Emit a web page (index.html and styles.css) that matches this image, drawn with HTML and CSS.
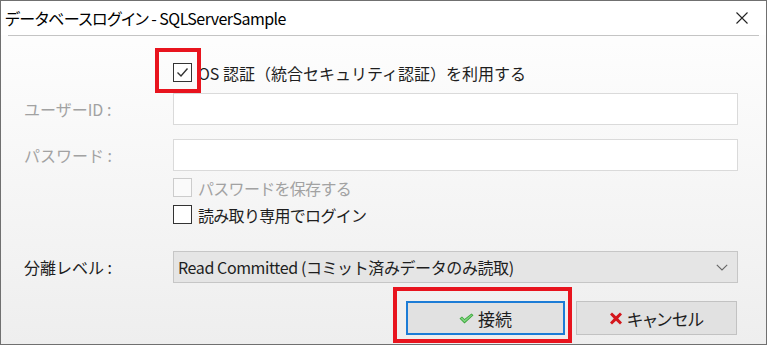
FILE: index.html
```html
<!DOCTYPE html>
<html lang="ja">
<head>
<meta charset="utf-8">
<link rel="stylesheet" href="styles.css">
</head>
<body>
<div class="window">
  <div class="titlebar">
    <span class="title">データベースログイン - SQLServerSample</span>
    <svg class="close" width="12" height="12" viewBox="0 0 12 12"><path d="M0.5 0.5 L11.5 11.5 M11.5 0.5 L0.5 11.5" stroke="#222" stroke-width="1.1" fill="none"/></svg>
  </div>
  <div class="sep"></div>
  <div class="content">
    <div class="row row-os">
      <div class="lbl"></div>
      <label class="check">
        <span class="box checked">
          <svg width="17" height="17" viewBox="0 0 17 17"><polyline points="3.5,8.5 7,12 13.5,4.5" fill="none" stroke="#333" stroke-width="1.4"/></svg>
          <span class="mark"></span>
        </span>
        <span class="ctext">OS 認証（統合セキュリティ認証）を利用する</span>
      </label>
    </div>
    <div class="row row-user">
      <div class="lbl disabled">ユーザーID :</div>
      <div class="input"></div>
    </div>
    <div class="row row-pass">
      <div class="lbl disabled">パスワード :</div>
      <div class="input"></div>
    </div>
    <div class="row row-save">
      <div class="lbl"></div>
      <label class="check">
        <span class="box disabled-box"></span>
        <span class="ctext tight disabled">パスワードを保存する</span>
      </label>
    </div>
    <div class="row row-ro">
      <div class="lbl"></div>
      <label class="check">
        <span class="box"></span>
        <span class="ctext tight">読み取り専用でログイン</span>
      </label>
    </div>
    <div class="row row-iso">
      <div class="lbl">分離レベル :</div>
      <div class="combo">
        <span class="combo-text">Read Committed (コミット済みデータのみ読取)</span>
        <svg class="chev" width="12" height="7" viewBox="0 0 12 7"><polyline points="0.8,0.8 6,6 11.2,0.8" fill="none" stroke="#666" stroke-width="1.1"/></svg>
      </div>
    </div>
    <div class="buttons">
      <div class="btn btn-ok">
        <svg class="icon" width="15" height="11" viewBox="0 0 15 11"><path d="M0.5 5.5 L3 3.5 L5.5 6 L12.5 0.5 L14.5 2.2 L5.5 10.5 Z" fill="#3aa63a"/><path d="M1.5 5.5 L3 4.5 L5.5 7 L12.5 1.5 L13.3 2.2 L5.5 9.3 Z" fill="#7fd47f"/></svg>
        <span>接続</span>
        <span class="mark mark-btn"></span>
      </div>
      <div class="btn btn-cancel">
        <svg class="icon" width="14" height="13" viewBox="0 0 14 13"><path d="M1 2.5 L3 0.5 L7 4.3 L11 0.5 L13 2.5 L9.2 6.5 L13 10.5 L11 12.5 L7 8.7 L3 12.5 L1 10.5 L4.8 6.5 Z" fill="#d4161c"/></svg>
        <span class="cancel-text">キャンセル</span>
      </div>
    </div>
  </div>
</div>
</body>
</html>
```

FILE: styles.css
```css
html, body {
  margin: 0;
  padding: 0;
  background: #ffffff;
}

body {
  font-family: "Noto Sans CJK JP", "Noto Sans", sans-serif;
  color: #1e1e1e;
}

.window {
  box-sizing: border-box;
  width: 767px;
  height: 345px;
  border: 1px solid #707070;
  background: linear-gradient(#fdfdfd 0%, #fdfdfd 12%, #eeeeee 100%);
  display: flex;
  flex-direction: column;
  overflow: hidden;
}

.titlebar {
  height: 34px;
  background: #ffffff;
  display: flex;
  align-items: center;
  justify-content: space-between;
  padding: 0 18px 0 4px;
}

.title {
  font-size: 16px;
  color: #000;
  font-feature-settings: "palt";
  letter-spacing: -0.55px;
  line-height: 1;
  margin-top: -1px;
}

.close {
  display: block;
}

.sep {
  height: 1px;
  margin: 0 7px;
  background: #c4c4c4;
}

.content {
  flex: 1;
  padding: 27px 28px 0 23px;
  display: flex;
  flex-direction: column;
}

.row {
  display: flex;
  align-items: center;
}

.lbl {
  width: 149px;
  flex: none;
  font-size: 16px;
  line-height: 1;
  color: #1e1e1e;
}

.disabled {
  color: #a2a2a2;
}

.row-os { height: 19px; }
.row-user { margin-top: 11px; }
.row-pass { margin-top: 14px; }
.row-save { margin-top: 7px; height: 19px; }
.row-ro { margin-top: 8px; height: 19px; }
.row-iso { margin-top: 27px; }

.check {
  display: flex;
  align-items: center;
  position: relative;
}

.box {
  box-sizing: border-box;
  width: 19px;
  height: 19px;
  border: 1px solid #333333;
  background: #ffffff;
  display: flex;
  align-items: center;
  justify-content: center;
  position: relative;
}

.box svg {
  display: block;
}

.disabled-box {
  border-color: #cccccc;
  background: #fafafa;
}

.ctext {
  margin-left: 6px;
  font-size: 16px;
  line-height: 1;
}

.tight {
  letter-spacing: -0.7px;
}

.mark {
  position: absolute;
  box-sizing: border-box;
  border: 4px solid #e8141e;
  left: -19px;
  top: -16px;
  width: 46px;
  height: 45px;
}

.input {
  box-sizing: border-box;
  width: 565px;
  height: 32px;
  border: 1px solid #dadada;
  background: #ffffff;
}

.combo {
  box-sizing: border-box;
  width: 565px;
  height: 32px;
  border: 1px solid #c6c6c6;
  background: #e5e5e5;
  display: flex;
  align-items: center;
  justify-content: space-between;
  padding: 0 9px 0 4px;
}

.combo-text {
  font-size: 16px;
  line-height: 1;
  letter-spacing: -0.4px;
  color: #1e1e1e;
}

.chev {
  display: block;
}

.buttons {
  margin-top: 18px;
  display: flex;
  justify-content: flex-end;
  gap: 11px;
  padding-right: 1px;
}

.btn {
  box-sizing: border-box;
  height: 34px;
  background: #e1e1e1;
  display: flex;
  align-items: center;
  justify-content: center;
  gap: 4px;
  font-size: 17px;
  line-height: 1;
  color: #1e1e1e;
  position: relative;
}

.btn-ok {
  width: 159px;
  border: 2px solid #1c7cd6;
}

.btn-cancel {
  width: 161px;
  border: 1px solid #c2c2c2;
}

.cancel-text {
  font-feature-settings: "palt";
}

.icon {
  display: block;
}

.mark-btn {
  left: -15px;
  top: -16px;
  width: 179px;
  height: 56px;
}
```
